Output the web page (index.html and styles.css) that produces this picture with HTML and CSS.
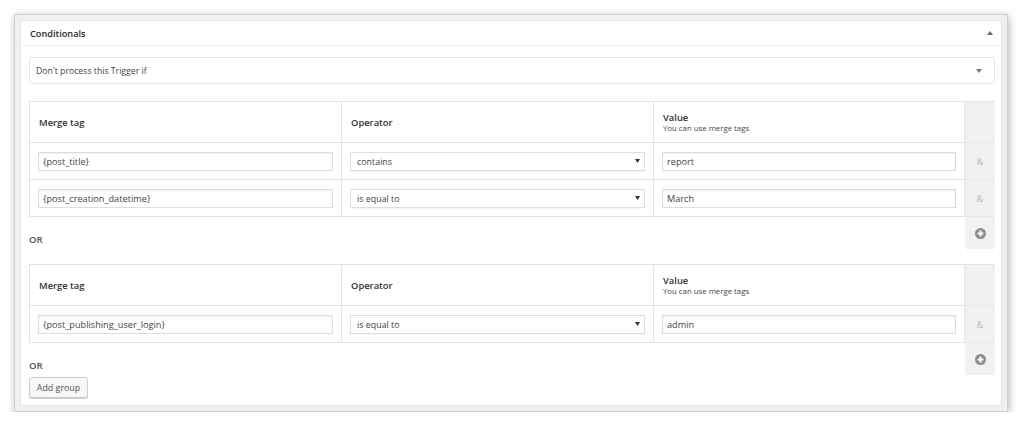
FILE: index.html
```html
<!DOCTYPE html>
<html lang="en">
<head>
<meta charset="utf-8">
<title>Conditionals</title>
<link rel="stylesheet" href="styles.css">
</head>
<body>
<div class="page">
  <div class="frame">
    <div class="postbox">
      <div class="hndle">
        <span class="title">Conditionals</span>
        <svg class="toggle" width="6" height="4" viewBox="0 0 6 4"><polygon points="0,4 6,4 3,0"/></svg>
      </div>
      <div class="inside">
        <div class="dropdown">
          <span>Don't process this Trigger if</span>
          <svg class="caret" width="6" height="4" viewBox="0 0 6 4"><polygon points="0,0 6,0 3,4"/></svg>
        </div>

        <div class="group">
          <div class="th first">Merge tag</div>
          <div class="th">Operator</div>
          <div class="th"><span>Value</span><small>You can use merge tags</small></div>
          <div class="act head"></div>

          <div class="td first"><input class="field" type="text" value="{post_title}"></div>
          <div class="td"><div class="select"><span>contains</span><svg width="5" height="4" viewBox="0 0 5 4"><polygon points="0,0 5,0 2.5,4"/></svg></div></div>
          <div class="td"><input class="field" type="text" value="report"></div>
          <div class="act amp">&amp;</div>

          <div class="td first"><input class="field" type="text" value="{post_creation_datetime}"></div>
          <div class="td"><div class="select"><span>is equal to</span><svg width="5" height="4" viewBox="0 0 5 4"><polygon points="0,0 5,0 2.5,4"/></svg></div></div>
          <div class="td"><input class="field" type="text" value="March"></div>
          <div class="act amp">&amp;</div>

          <div class="or">OR</div>
          <div class="act add"><svg width="11" height="11" viewBox="0 0 11 11"><circle cx="5.5" cy="5.5" r="5.5"/><path d="M5.5 2.6v5.8M2.6 5.5h5.8"/></svg></div>
        </div>

        <div class="group">
          <div class="th first">Merge tag</div>
          <div class="th">Operator</div>
          <div class="th"><span>Value</span><small>You can use merge tags</small></div>
          <div class="act head"></div>

          <div class="td first"><input class="field" type="text" value="{post_publishing_user_login}"></div>
          <div class="td"><div class="select"><span>is equal to</span><svg width="5" height="4" viewBox="0 0 5 4"><polygon points="0,0 5,0 2.5,4"/></svg></div></div>
          <div class="td"><input class="field" type="text" value="admin"></div>
          <div class="act amp">&amp;</div>

          <div class="or">OR</div>
          <div class="act add"><svg width="11" height="11" viewBox="0 0 11 11"><circle cx="5.5" cy="5.5" r="5.5"/><path d="M5.5 2.6v5.8M2.6 5.5h5.8"/></svg></div>
        </div>

        <button class="btn" type="button">Add group</button>
      </div>
    </div>
  </div>
</div>
</body>
</html>
```

FILE: styles.css
```css
body {
  margin: 0;
  background: #fff;
  font-family: "Open Sans", "Noto Sans", sans-serif;
  color: #32373c;
}

.page {
  padding: 14px 0 0 14px;
}

.frame {
  width: 994px;
  box-sizing: border-box;
  border: 1px solid #cfcfcf;
  background: #f0f0f0;
  padding: 5px;
  box-shadow: 1px 2px 8px rgba(0, 0, 0, 0.28);
}

.postbox {
  background: #fff;
  border: 1px solid #e5e5e5;
}

.hndle {
  height: 25px;
  box-sizing: border-box;
  border-bottom: 1px solid #eee;
  display: flex;
  align-items: center;
  justify-content: space-between;
  padding: 0 8px 0 9px;
}

.title {
  font-size: 9.2px;
  font-weight: 600;
  color: #23282d;
}

.toggle {
  fill: #666;
}

.inside {
  padding: 11px 6px 7px 8px;
}

.dropdown {
  height: 27px;
  box-sizing: border-box;
  border: 1px solid #e6e6e6;
  border-radius: 3px;
  display: flex;
  align-items: center;
  justify-content: space-between;
  padding: 0 12px 0 6px;
  font-size: 8.7px;
  color: #444;
  margin-bottom: 17px;
}

.caret {
  fill: #777;
}

.group {
  display: grid;
  grid-template-columns: 313px 312px 311px 30px;
}

.group + .group {
  margin-top: 15px;
}

.th {
  height: 42px;
  box-sizing: border-box;
  border-top: 1px solid #e3e3e3;
  border-right: 1px solid #e3e3e3;
  border-bottom: 1px solid #e3e3e3;
  padding: 0 9px;
  display: flex;
  flex-direction: column;
  justify-content: center;
  font-size: 9.4px;
  font-weight: 600;
  color: #2c3338;
  line-height: 11px;
}

.th small {
  font-size: 7.8px;
  font-weight: 400;
  color: #444;
  line-height: 10px;
}

.td {
  height: 37px;
  box-sizing: border-box;
  border-right: 1px solid #e3e3e3;
  border-bottom: 1px solid #e3e3e3;
  padding: 0 8px;
  display: flex;
  align-items: center;
}

.first {
  border-left: 1px solid #e3e3e3;
}

.field {
  width: 100%;
  height: 19px;
  box-sizing: border-box;
  margin: 0;
  border: 1px solid #ddd;
  box-shadow: inset 0 1px 2px rgba(0, 0, 0, 0.06);
  padding: 0 4px;
  font-family: "Open Sans", "Noto Sans", sans-serif;
  font-size: 9.2px;
  color: #444;
  background: #fff;
  outline: none;
}

.select {
  width: 100%;
  height: 19px;
  box-sizing: border-box;
  border: 1px solid #ddd;
  box-shadow: 0 1px 0 rgba(0, 0, 0, 0.03);
  display: flex;
  align-items: center;
  justify-content: space-between;
  padding: 0 4px 0 6px;
  font-size: 8.9px;
  color: #444;
  background: #fff;
}

.select svg {
  fill: #333;
}

.act {
  background: #f1f1f1;
  box-sizing: border-box;
  border-bottom: 1px solid #e8e8e8;
  display: flex;
  align-items: center;
  justify-content: center;
}

.act.head {
  height: 42px;
  border-top: 1px solid #e3e3e3;
  border-bottom: 1px solid #e8e8e8;
}

.act.amp {
  height: 37px;
  font-size: 9.5px;
  color: #b9b9b9;
}

.act.add {
  height: 32px;
  border-bottom: none;
}

.add circle {
  fill: #8d8d8d;
}

.add path {
  stroke: #fff;
  stroke-width: 1.9;
}

.or {
  grid-column: 1 / span 3;
  padding-top: 16px;
  font-size: 9.6px;
  font-weight: 600;
  line-height: 13px;
  color: #555;
}

.btn {
  display: block;
  margin-top: 2px;
  width: 59px;
  height: 21px;
  box-sizing: border-box;
  border: 1px solid #ccc;
  border-radius: 3px;
  background: #f7f7f7;
  box-shadow: 0 1px 0 #ccc;
  padding: 0;
  font-family: "Open Sans", "Noto Sans", sans-serif;
  font-size: 8.9px;
  color: #555;
}
```
